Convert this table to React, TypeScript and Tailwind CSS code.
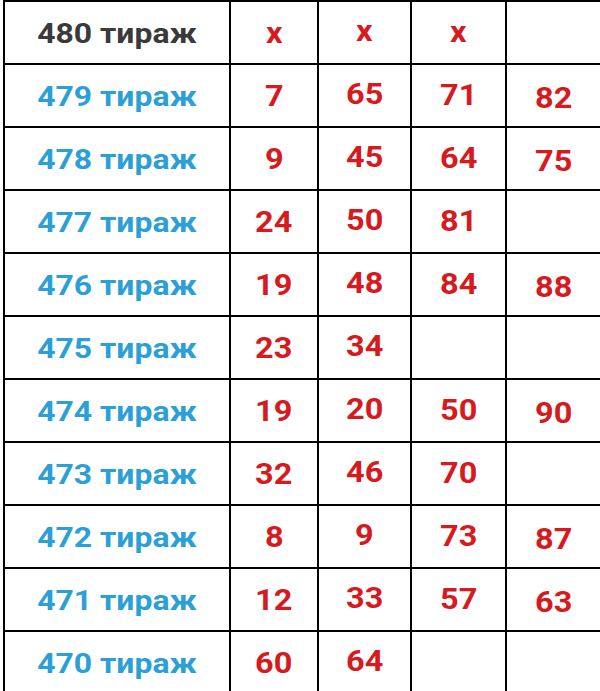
import React from "react";

const rows: { label: string; head?: boolean; nums: string[] }[] = [
  { label: "480 тираж", head: true, nums: ["x", "x", "x", ""] },
  { label: "479 тираж", nums: ["7", "65", "71", "82"] },
  { label: "478 тираж", nums: ["9", "45", "64", "75"] },
  { label: "477 тираж", nums: ["24", "50", "81", ""] },
  { label: "476 тираж", nums: ["19", "48", "84", "88"] },
  { label: "475 тираж", nums: ["23", "34", "", ""] },
  { label: "474 тираж", nums: ["19", "20", "50", "90"] },
  { label: "473 тираж", nums: ["32", "46", "70", ""] },
  { label: "472 тираж", nums: ["8", "9", "73", "87"] },
  { label: "471 тираж", nums: ["12", "33", "57", "63"] },
  { label: "470 тираж", nums: ["60", "64", "", ""] },
];

const numCls =
  "h-full border-r-2 border-b-2 border-black flex items-center justify-center pt-[3px] text-[29px] font-bold text-[#d51a20]";

export default function App() {
  return (
    <div className="w-[600px] h-[691px] overflow-hidden bg-white" style={{ fontFamily: "Roboto, 'Noto Sans', sans-serif" }}>
      <div className="ml-[3px] w-[700px] border-l-2 border-t-2 border-black">
        {rows.map((r, i) => (
          <div key={i} className="flex h-[63px]">
            <div
              className={`w-[226px] h-full border-r-2 border-b-2 border-black flex items-center justify-center pt-[3px] text-[28px] font-bold ${
                r.head ? "text-[#3a3a3a]" : "text-[#2ba0d6]"
              }`}
            >
              <span className="inline-block scale-x-[1.14]">{r.label}</span>
            </div>
            <div className={`w-[88px] ${numCls}`}>
              <span className="inline-block scale-x-[1.12]">{r.nums[0]}</span>
            </div>
            <div className={`w-[93px] ${numCls}`}>
              <span className="inline-block scale-x-[1.12] -translate-y-[2px]">{r.nums[1]}</span>
            </div>
            <div className={`w-[95px] ${numCls}`}>
              <span className="inline-block scale-x-[1.12] -translate-y-[1px]">{r.nums[2]}</span>
            </div>
            <div className={`w-[95px] ${numCls}`}>
              <span className="inline-block scale-x-[1.12] translate-y-[2px]">{r.nums[3]}</span>
            </div>
          </div>
        ))}
      </div>
    </div>
  );
}
